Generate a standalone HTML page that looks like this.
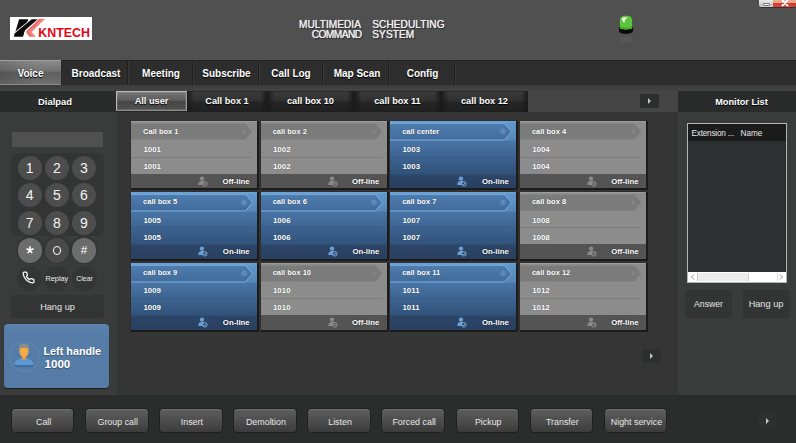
<!DOCTYPE html>
<html>
<head>
<meta charset="utf-8">
<title>Multimedia Scheduling Command System</title>
<style>
*{box-sizing:border-box;margin:0;padding:0}
html,body{width:796px;height:443px;overflow:hidden;background:#505050}
body{position:relative;font-family:"Liberation Sans",sans-serif;color:#fff}
.abs{position:absolute}
/* header */
#hdr{left:0;top:0;width:796px;height:60px;background:#505050}
#logo{left:10px;top:17px;width:81.7px;height:23px;background:#fff;overflow:hidden}
.title{top:20.3px;font-size:10.2px;line-height:10px;color:#ececec;text-shadow:0 0 .7px #fff,1px 1px 1px #1c1c1c;white-space:nowrap}
/* nav */
#nav{left:0;top:60px;width:796px;height:25px;background:#2d2d2d;border-top:1px solid #242424}
.nt{position:absolute;top:0;height:24px;font-size:10px;font-weight:bold;text-align:center;line-height:25.6px;border-right:1px solid #1f1f1f;box-shadow:1px 0 0 #383838;color:#fff;text-shadow:0 1px 1px #000}
#gap{left:0;top:85px;width:796px;height:6px;background:linear-gradient(to bottom,#3c3c3c,#434343)}
/* sub row */
#subrow{left:0;top:91px;width:796px;height:21px;background:#454545}
.st{position:absolute;top:0;height:21px;font-size:9.2px;font-weight:bold;text-align:center;line-height:21px;color:#fff;text-shadow:0 1px 1px #000}
.dk{background:#2a2c2c}
.tab{background:linear-gradient(to right,#1a1a1a 0,rgba(26,26,26,0) 9%,rgba(26,26,26,0) 92%,#1a1a1a 100%),linear-gradient(to bottom,#1c1c1c 0,#3b3b3b 1px,#303030 46%,#252525 54%,#1f1f1f 100%)}
.arrow{position:absolute;width:19px;height:14px;background:#2d2f2f}
.arrow:after{content:"";position:absolute;left:8px;top:4.2px;border-left:3.7px solid #c6c6c6;border-top:3.1px solid transparent;border-bottom:3.1px solid transparent}
/* panels */
#left{left:0;top:112px;width:117px;height:283px;background:#3a3c3c}
#main{left:117px;top:112px;width:561px;height:283px;background:#353535}
#right{left:678px;top:112px;width:118px;height:283px;background:#3a3c3c}
#bottom{left:0;top:395px;width:796px;height:48px;background:#2b2d2d}
/* keypad */
.key{position:absolute;width:24px;height:24px;border-radius:12px;background:#4d4d4d;color:#f4f4f4;font-size:14px;line-height:24.6px;text-align:center}
/* cards */
.card{position:absolute;width:126px;height:67.1px;background:linear-gradient(to bottom,#a8a8a8 0,#8c8c8c 1.2px);box-shadow:1px 1px 0 1px #1b1b1b,0 0 0 .5px #2a2a2a;overflow:hidden}
.card .t{position:absolute;left:11.8px;font-size:7.5px;font-weight:bold;color:#fff;white-space:nowrap;text-shadow:0 0 1px rgba(0,0,0,.45)}
.card .t.n{font-size:7.9px;left:12.1px}
.card .sep{position:absolute;left:0;top:35.3px;width:121px;height:1px;background:#7d7d7d}
.card .ft{position:absolute;left:0;top:52.5px;width:126px;height:15px;background:#545454}
.card .stt{position:absolute;right:7.6px;top:55.5px;font-size:7.8px;font-weight:bold;color:#fff;white-space:nowrap;text-shadow:0 0 1.5px rgba(0,0,0,.7)}
.card.on{background:linear-gradient(to bottom,#6ea6da 0,#659cd1 1.5px,#6097cb 3px,#5587b9 19px,#4975a6 20px,#406896 32px,#385d88 42px,#31537b 52px)}
.card.on .sep{background:#385c87}
.card.on .ft{background:linear-gradient(to bottom,#314f74 0,#2c4566 2px,#294060 100%)}
/* bottom buttons */
.bb{position:absolute;top:407.7px;width:63.5px;height:25.8px;border-radius:4px;border:1px solid #202020;background:linear-gradient(to bottom,#5e5e5e 0,#4d4d4d 50%,#3c3c3c 100%);font-size:8.9px;color:#e6e6e6;text-align:center;line-height:27px;padding-left:2px;box-shadow:inset 0 1px 0 #707070}
.rb{position:absolute;top:290px;height:28px;width:47px;border-radius:3px;background:#333535;font-size:9.2px;color:#e6e6e6;text-align:center;line-height:29.5px}
</style>
</head>
<body>
<div id="hdr" class="abs"></div>
<div id="logo" class="abs">
<svg width="82" height="23" viewBox="0 0 82 23">
<polygon points="9.1,2.2 18.2,2.2 12.9,19.4 4,19.4" fill="#0c0c0c"/>
<polygon points="21.7,2.2 27.7,2.2 14.5,13.7 12.9,19.4 4,19.4 5.2,15.5" fill="#0c0c0c"/>
<polygon points="4.6,15.2 17.8,4.4 18.3,5.1 5.1,16" fill="#fff"/>
<polygon points="29,1.7 35.3,1.7 21.7,15 25.8,19.7 19.2,19.7 15.7,14.7" fill="#e8392f" opacity=".62"/>
<path d="M30.5 2.5 L17.5 14.7 L21.5 19.3" fill="none" stroke="#e8392f" stroke-width=".9" opacity=".8"/>
<text x="28.3" y="20.1" font-family="Liberation Sans, sans-serif" font-weight="bold" font-size="13.4" fill="#e30613" textLength="51.7" lengthAdjust="spacingAndGlyphs">KNTECH</text>
</svg>
</div>
<div class="abs title" style="left:291px;width:70px;text-align:right">MULTIMEDIA<br><span style="letter-spacing:-.55px;margin-right:-.55px">COMMAND</span></div>
<div class="abs title" style="left:372.3px;text-align:left">SCHEDULTING<br>SYSTEM</div>

<div class="abs" style="left:759px;top:0;width:14px;height:8px;background:linear-gradient(to bottom,#e9e9e9 0,#dcdcdc 45%,#c2c2c2 55%,#d0d0d0 100%);border-radius:0 0 0 3px;border-bottom:1px solid #333"><div class="abs" style="left:4px;top:2.5px;width:7px;height:3px;background:#fff;border:1px solid #777;border-radius:1px"></div></div>
<div class="abs" style="left:773px;top:0;width:23px;height:8px;background:linear-gradient(to bottom,#e8b090 0,#e6a58a 40%,#d8392f 50%,#e0453a 100%);border-radius:0 0 3px 0;border-bottom:1px solid #333"><svg class="abs" style="left:8px;top:-0.5px" width="8" height="7" viewBox="0 0 8 7"><path d="M1.5 0.5 L6.5 5.5 M6.5 0.5 L1.5 5.5" stroke="#fff" stroke-width="1.8" stroke-linecap="round"/></svg></div>
<svg class="abs" style="left:617px;top:14.4px" width="18" height="32" viewBox="0 0 18 32">
<path d="M2 13 L2 17.3 C2 20.6 16 20.6 16 17.3 L16 13 Z" fill="#0a0a0a"/>
<path d="M2.9 14.3 L2.9 6.5 C2.9 3 5 1.7 9 1.7 S15.1 3 15.1 6.5 L15.1 14.3 C12.8 15.8 5.2 15.8 2.9 14.3 Z" fill="#5bc63c"/>
<path d="M4.6 4.6 C6.2 3.3 9 3.1 10.8 3.5 C8.6 4.3 7.7 6 7.3 9 C6.2 8 5.1 6.6 4.6 4.6 Z" fill="#f4fff0"/>
<path d="M2.9 11.5 C5.2 13.6 12.8 13.6 15.1 11.5 L15.1 14.3 C12.8 15.8 5.2 15.8 2.9 14.3 Z" fill="#46b32c"/>
<ellipse cx="9" cy="25.5" rx="6" ry="3.5" fill="#5e5e5e" opacity=".5"/>
</svg>
<div id="nav" class="abs">
<div class="nt" style="left:0;top:-1px;height:25px;width:62px;line-height:27.6px;border-right:1px solid #2a2a2a;background:linear-gradient(to right,rgba(40,40,40,.22) 0,rgba(40,40,40,0) 60%),linear-gradient(to bottom,#8c8c8c 0,#747474 42%,#5e5e5e 52%,#707070 100%);box-shadow:inset 0 1px 0 #a0a0a0,inset 0 -1px 0 #8a8a8a">Voice</div>
<div class="nt" style="left:62px;width:66px;padding-left:3px">Broadcast</div>
<div class="nt" style="left:128px;width:65px;padding-left:2px">Meeting</div>
<div class="nt" style="left:193px;width:66px;padding-left:2px">Subscribe</div>
<div class="nt" style="left:259px;width:64px;padding-left:1px">Call Log</div>
<div class="nt" style="left:323px;width:66px;padding-left:3px">Map Scan</div>
<div class="nt" style="left:389px;width:66px;padding-left:2px">Config</div>
</div>
<div id="gap" class="abs"></div>

<div id="subrow" class="abs">
<div class="st dk" style="left:0;width:116px;padding-right:6px;font-size:9.4px">Dialpad</div>
<div class="st" style="left:116px;width:71px;border:1px solid #b8b8b8;border-right-color:#999;border-bottom-color:#8d8d8d;background:linear-gradient(to bottom,#767676 0,#5c5c5c 46%,#454545 54%,#515151 100%);box-shadow:inset 0 0 0 1px rgba(255,255,255,.12);height:20.3px;box-shadow:inset 0 0 0 1px rgba(255,255,255,.12),0 1px 0 #262626;line-height:18.5px">All user</div>
<div class="st tab" style="left:187px;width:80px">Call box 1</div>
<div class="st tab" style="left:267px;width:87px">call box 10</div>
<div class="st tab" style="left:354px;width:87px">call box 11</div>
<div class="st tab" style="left:441px;width:87px">call box 12</div>
<div class="arrow" style="left:640px;top:3px"></div>
<div class="st dk" style="left:678px;width:118px;padding-left:9px;line-height:22.5px">Monitor List</div>
</div>

<div id="left" class="abs"></div>
<div id="main" class="abs"></div>
<div id="right" class="abs"></div>
<div id="bottom" class="abs"></div>

<!-- LEFT PANEL CONTENT -->
<div id="lp">
<div class="abs" style="left:12px;top:132px;width:91px;height:15px;background:#505050"></div>
<div class="abs" style="left:11px;top:153px;width:93px;height:83px;border-radius:8px;background:#333535"></div>
<div class="key" style="left:17.7px;top:155.8px">1</div>
<div class="key" style="left:44.9px;top:155.8px">2</div>
<div class="key" style="left:72.0px;top:155.8px">3</div>
<div class="key" style="left:17.7px;top:183.4px">4</div>
<div class="key" style="left:44.9px;top:183.4px">5</div>
<div class="key" style="left:72.0px;top:183.4px">6</div>
<div class="key" style="left:17.7px;top:210.8px">7</div>
<div class="key" style="left:44.9px;top:210.8px">8</div>
<div class="key" style="left:72.0px;top:210.8px">9</div>
<div class="abs" style="left:15.7px;top:236.4px;width:28px;height:28px;border-radius:14px;background:#343636"></div>
<div class="key" style="left:17.5px;top:238.2px;width:24.4px;height:24.4px;border-radius:13px;background:#6c6c6c"></div>
<div class="abs" style="left:42.9px;top:236.4px;width:28px;height:28px;border-radius:14px;background:#343636"></div>
<div class="key" style="left:44.7px;top:238.2px;width:24.4px;height:24.4px;border-radius:13px;background:#4a4a4a"></div>
<div class="abs" style="left:70.1px;top:236.4px;width:28px;height:28px;border-radius:14px;background:#343636"></div>
<div class="key" style="left:71.9px;top:238.2px;width:24.4px;height:24.4px;border-radius:13px;background:#6c6c6c"></div>
<svg class="abs" style="left:24.7px;top:245.4px" width="10" height="10" viewBox="-5 -5 10 10"><path d="M0 -3.8 L0 0 L3.6 -1.2 M0 0 L2.2 3.1 M0 0 L-2.2 3.1 M0 0 L-3.6 -1.2" fill="none" stroke="#fff" stroke-width="1.5"/></svg>
<div class="abs" style="left:52.7px;top:246.2px;width:8.4px;height:8.4px;border-radius:5px;border:1.5px solid #fff"></div>
<div class="abs" style="left:72.1px;top:238.4px;width:24px;height:24px;line-height:24.5px;text-align:center;font-size:11.8px;color:#fff">#</div>
<div class="key" style="left:17.2px;top:266.3px;width:25px;height:25px;border-radius:13px;line-height:26px;padding-left:0px;background:#343636;font-size:7.3px;color:#ececec"></div>
<div class="key" style="left:44.4px;top:266.3px;width:25px;height:25px;border-radius:13px;line-height:26px;padding-left:0px;background:#343636;font-size:7.3px;color:#ececec">Replay</div>
<div class="key" style="left:71.6px;top:266.3px;width:25px;height:25px;border-radius:13px;line-height:26px;padding-left:1px;background:#343636;font-size:6.9px;color:#ececec">Clear</div>
<svg class="abs" style="left:22px;top:271px" width="13" height="13" viewBox="0 0 24 24"><path d="M22 16.920v3a2 2 0 0 1-2.180 2 19.790 19.790 0 0 1-8.630-3.070 19.5 19.5 0 0 1-6-6 19.790 19.790 0 0 1-3.070-8.670A2 2 0 0 1 4.110 2h3a2 2 0 0 1 2 1.720 12.840 12.840 0 0 0 .7 2.810 2 2 0 0 1-.45 2.110L8.090 9.910a16 16 0 0 0 6 6l1.270-1.270a2 2 0 0 1 2.110-.45 12.840 12.840 0 0 0 2.810.7A2 2 0 0 1 22 16.920z" fill="none" stroke="#fff" stroke-width="2.3" stroke-linejoin="round"/></svg>
<div class="abs" style="left:11px;top:295px;width:93px;height:23px;border-radius:3px;background:#333535;font-size:9.2px;color:#e6e6e6;text-align:center;line-height:24.5px">Hang up</div>
<div class="abs" style="left:4px;top:324px;width:105.2px;height:64px;border-radius:4px;background:linear-gradient(to bottom,#5b83ad 0,#567da7 12px,#557ca6 100%);box-shadow:0 1px 1px #1c1c1c"></div>
<div class="abs" style="left:8.5px;top:341px;width:31px;height:31px;border-radius:16px;border:1px solid #6287b1"></div>
<svg class="abs" style="left:14.4px;top:341.4px" width="20" height="28" viewBox="0 0 20 28">
<path d="M0.8 24 C0.8 19.5 4.5 17.8 10 17.8 S19.2 19.5 19.2 24 L19.2 25 L0.8 25 Z" fill="#5b9bd5"/>
<rect x="0.8" y="24.2" width="18.4" height="1.3" fill="#3d5f8f"/>
<rect x="7.8" y="14" width="4.4" height="4.5" fill="#e8963a"/>
<ellipse cx="10" cy="10.3" rx="4.6" ry="5.6" fill="#f6ab47"/>
<path d="M4.6 9.5 C4 4 7 2.5 10 2.5 S16 4 15.4 9.5 C14.5 7.5 13 6.5 10 6.8 C7.5 6.5 5.5 7.5 4.6 9.5 Z" fill="#8c8c8c"/>
</svg>
<div class="abs" style="left:43.5px;top:345px;font-size:10.8px;font-weight:bold;line-height:12.6px;white-space:nowrap;text-shadow:0 1px 1px rgba(0,0,0,.35)">Left handle<br><span style="font-size:11.6px;margin-left:1px">1000</span></div>
</div>
<!-- CARDS -->
<div id="cards">
<svg width="0" height="0" style="position:absolute"><defs><linearGradient id="gb" x1="0" y1="0" x2="0" y2="1"><stop offset="0" stop-color="#4e7daf"/><stop offset="1" stop-color="#426b9b"/></linearGradient></defs></svg>
<div class="card" style="left:131.3px;top:121.3px"><svg class="abs" style="left:0;top:0" width="126" height="22" viewBox="0 0 126 22"><path d="M-1 2.3 H114.5 L121.6 10.6 L114.5 18.9 H-1 Z" fill="#7b7b7b" stroke="#949494" stroke-width=".8" stroke-opacity=".7"/><circle cx="113" cy="10.5" r="2.3" fill="none" stroke="#9a9a9a" stroke-width=".7" opacity=".35"/><circle cx="113" cy="10.5" r=".85" fill="#9a9a9a" opacity=".85"/></svg><div class="t" style="top:5.5px">Call box 1</div><div class="t n" style="top:23.7px">1001</div><div class="sep"></div><div class="t n" style="top:40.7px">1001</div><div class="ft"></div><svg class="abs" style="left:67px;top:54.5px" width="11" height="11" viewBox="0 0 11 11"><circle cx="4" cy="2.6" r="2.2" fill="#8a8a8a"/><path d="M0.3 8.5 C0.3 5.8 2 5 4 5 S6.5 5.5 7 6 L5 9 L0.3 9 Z" fill="#8a8a8a"/><circle cx="6.8" cy="7.8" r="2.3" fill="#545454" stroke="#a0a0a0" stroke-width=".8"/><path d="M5.4 7.8 h2.6" stroke="#a0a0a0" stroke-width=".8"/></svg><div class="stt">Off-line</div></div>
<div class="card" style="left:260.9px;top:121.3px"><svg class="abs" style="left:0;top:0" width="126" height="22" viewBox="0 0 126 22"><path d="M-1 2.3 H114.5 L121.6 10.6 L114.5 18.9 H-1 Z" fill="#7b7b7b" stroke="#949494" stroke-width=".8" stroke-opacity=".7"/><circle cx="113" cy="10.5" r="2.3" fill="none" stroke="#9a9a9a" stroke-width=".7" opacity=".35"/><circle cx="113" cy="10.5" r=".85" fill="#9a9a9a" opacity=".85"/></svg><div class="t" style="top:5.5px">call box 2</div><div class="t n" style="top:23.7px">1002</div><div class="sep"></div><div class="t n" style="top:40.7px">1002</div><div class="ft"></div><svg class="abs" style="left:67px;top:54.5px" width="11" height="11" viewBox="0 0 11 11"><circle cx="4" cy="2.6" r="2.2" fill="#8a8a8a"/><path d="M0.3 8.5 C0.3 5.8 2 5 4 5 S6.5 5.5 7 6 L5 9 L0.3 9 Z" fill="#8a8a8a"/><circle cx="6.8" cy="7.8" r="2.3" fill="#545454" stroke="#a0a0a0" stroke-width=".8"/><path d="M5.4 7.8 h2.6" stroke="#a0a0a0" stroke-width=".8"/></svg><div class="stt">Off-line</div></div>
<div class="card on" style="left:390.4px;top:121.3px"><svg class="abs" style="left:0;top:0" width="126" height="22" viewBox="0 0 126 22"><path d="M-1 2.3 H114.5 L121.6 10.6 L114.5 18.9 H-1 Z" fill="url(#gb)" stroke="#8cc0ee" stroke-width=".8" stroke-opacity=".9"/><circle cx="113" cy="10.5" r="2.3" fill="none" stroke="#8fbdea" stroke-width=".7" opacity=".6"/><circle cx="113" cy="10.5" r=".85" fill="#8fbdea" opacity=".85"/></svg><div class="t" style="top:5.5px">call center</div><div class="t n" style="top:23.7px">1003</div><div class="sep"></div><div class="t n" style="top:40.7px">1003</div><div class="ft"></div><svg class="abs" style="left:67px;top:54.5px" width="11" height="11" viewBox="0 0 11 11"><circle cx="4" cy="2.6" r="2.2" fill="#6c9fd5"/><path d="M0.3 8.5 C0.3 5.8 2 5 4 5 S6.5 5.5 7 6 L5 9 L0.3 9 Z" fill="#6c9fd5"/><circle cx="6.8" cy="7.8" r="2.3" fill="#2c4668" stroke="#8abbe9" stroke-width=".8"/><path d="M5.5 7.9 l.9 .9 l1.7 -1.9" fill="none" stroke="#8abbe9" stroke-width=".9"/></svg><div class="stt">On-line</div></div>
<div class="card" style="left:520.1px;top:121.3px"><svg class="abs" style="left:0;top:0" width="126" height="22" viewBox="0 0 126 22"><path d="M-1 2.3 H114.5 L121.6 10.6 L114.5 18.9 H-1 Z" fill="#7b7b7b" stroke="#949494" stroke-width=".8" stroke-opacity=".7"/><circle cx="113" cy="10.5" r="2.3" fill="none" stroke="#9a9a9a" stroke-width=".7" opacity=".35"/><circle cx="113" cy="10.5" r=".85" fill="#9a9a9a" opacity=".85"/></svg><div class="t" style="top:5.5px">call box 4</div><div class="t n" style="top:23.7px">1004</div><div class="sep"></div><div class="t n" style="top:40.7px">1004</div><div class="ft"></div><svg class="abs" style="left:67px;top:54.5px" width="11" height="11" viewBox="0 0 11 11"><circle cx="4" cy="2.6" r="2.2" fill="#8a8a8a"/><path d="M0.3 8.5 C0.3 5.8 2 5 4 5 S6.5 5.5 7 6 L5 9 L0.3 9 Z" fill="#8a8a8a"/><circle cx="6.8" cy="7.8" r="2.3" fill="#545454" stroke="#a0a0a0" stroke-width=".8"/><path d="M5.4 7.8 h2.6" stroke="#a0a0a0" stroke-width=".8"/></svg><div class="stt">Off-line</div></div>
<div class="card on" style="left:131.3px;top:191.9px"><svg class="abs" style="left:0;top:0" width="126" height="22" viewBox="0 0 126 22"><path d="M-1 2.3 H114.5 L121.6 10.6 L114.5 18.9 H-1 Z" fill="url(#gb)" stroke="#8cc0ee" stroke-width=".8" stroke-opacity=".9"/><circle cx="113" cy="10.5" r="2.3" fill="none" stroke="#8fbdea" stroke-width=".7" opacity=".6"/><circle cx="113" cy="10.5" r=".85" fill="#8fbdea" opacity=".85"/></svg><div class="t" style="top:5.5px">call box 5</div><div class="t n" style="top:23.7px">1005</div><div class="sep"></div><div class="t n" style="top:40.7px">1005</div><div class="ft"></div><svg class="abs" style="left:67px;top:54.5px" width="11" height="11" viewBox="0 0 11 11"><circle cx="4" cy="2.6" r="2.2" fill="#6c9fd5"/><path d="M0.3 8.5 C0.3 5.8 2 5 4 5 S6.5 5.5 7 6 L5 9 L0.3 9 Z" fill="#6c9fd5"/><circle cx="6.8" cy="7.8" r="2.3" fill="#2c4668" stroke="#8abbe9" stroke-width=".8"/><path d="M5.5 7.9 l.9 .9 l1.7 -1.9" fill="none" stroke="#8abbe9" stroke-width=".9"/></svg><div class="stt">On-line</div></div>
<div class="card on" style="left:260.9px;top:191.9px"><svg class="abs" style="left:0;top:0" width="126" height="22" viewBox="0 0 126 22"><path d="M-1 2.3 H114.5 L121.6 10.6 L114.5 18.9 H-1 Z" fill="url(#gb)" stroke="#8cc0ee" stroke-width=".8" stroke-opacity=".9"/><circle cx="113" cy="10.5" r="2.3" fill="none" stroke="#8fbdea" stroke-width=".7" opacity=".6"/><circle cx="113" cy="10.5" r=".85" fill="#8fbdea" opacity=".85"/></svg><div class="t" style="top:5.5px">call box 6</div><div class="t n" style="top:23.7px">1006</div><div class="sep"></div><div class="t n" style="top:40.7px">1006</div><div class="ft"></div><svg class="abs" style="left:67px;top:54.5px" width="11" height="11" viewBox="0 0 11 11"><circle cx="4" cy="2.6" r="2.2" fill="#6c9fd5"/><path d="M0.3 8.5 C0.3 5.8 2 5 4 5 S6.5 5.5 7 6 L5 9 L0.3 9 Z" fill="#6c9fd5"/><circle cx="6.8" cy="7.8" r="2.3" fill="#2c4668" stroke="#8abbe9" stroke-width=".8"/><path d="M5.5 7.9 l.9 .9 l1.7 -1.9" fill="none" stroke="#8abbe9" stroke-width=".9"/></svg><div class="stt">On-line</div></div>
<div class="card on" style="left:390.4px;top:191.9px"><svg class="abs" style="left:0;top:0" width="126" height="22" viewBox="0 0 126 22"><path d="M-1 2.3 H114.5 L121.6 10.6 L114.5 18.9 H-1 Z" fill="url(#gb)" stroke="#8cc0ee" stroke-width=".8" stroke-opacity=".9"/><circle cx="113" cy="10.5" r="2.3" fill="none" stroke="#8fbdea" stroke-width=".7" opacity=".6"/><circle cx="113" cy="10.5" r=".85" fill="#8fbdea" opacity=".85"/></svg><div class="t" style="top:5.5px">call box 7</div><div class="t n" style="top:23.7px">1007</div><div class="sep"></div><div class="t n" style="top:40.7px">1007</div><div class="ft"></div><svg class="abs" style="left:67px;top:54.5px" width="11" height="11" viewBox="0 0 11 11"><circle cx="4" cy="2.6" r="2.2" fill="#6c9fd5"/><path d="M0.3 8.5 C0.3 5.8 2 5 4 5 S6.5 5.5 7 6 L5 9 L0.3 9 Z" fill="#6c9fd5"/><circle cx="6.8" cy="7.8" r="2.3" fill="#2c4668" stroke="#8abbe9" stroke-width=".8"/><path d="M5.5 7.9 l.9 .9 l1.7 -1.9" fill="none" stroke="#8abbe9" stroke-width=".9"/></svg><div class="stt">On-line</div></div>
<div class="card" style="left:520.1px;top:191.9px"><svg class="abs" style="left:0;top:0" width="126" height="22" viewBox="0 0 126 22"><path d="M-1 2.3 H114.5 L121.6 10.6 L114.5 18.9 H-1 Z" fill="#7b7b7b" stroke="#949494" stroke-width=".8" stroke-opacity=".7"/><circle cx="113" cy="10.5" r="2.3" fill="none" stroke="#9a9a9a" stroke-width=".7" opacity=".35"/><circle cx="113" cy="10.5" r=".85" fill="#9a9a9a" opacity=".85"/></svg><div class="t" style="top:5.5px">call box 8</div><div class="t n" style="top:23.7px">1008</div><div class="sep"></div><div class="t n" style="top:40.7px">1008</div><div class="ft"></div><svg class="abs" style="left:67px;top:54.5px" width="11" height="11" viewBox="0 0 11 11"><circle cx="4" cy="2.6" r="2.2" fill="#8a8a8a"/><path d="M0.3 8.5 C0.3 5.8 2 5 4 5 S6.5 5.5 7 6 L5 9 L0.3 9 Z" fill="#8a8a8a"/><circle cx="6.8" cy="7.8" r="2.3" fill="#545454" stroke="#a0a0a0" stroke-width=".8"/><path d="M5.4 7.8 h2.6" stroke="#a0a0a0" stroke-width=".8"/></svg><div class="stt">Off-line</div></div>
<div class="card on" style="left:131.3px;top:262.5px"><svg class="abs" style="left:0;top:0" width="126" height="22" viewBox="0 0 126 22"><path d="M-1 2.3 H114.5 L121.6 10.6 L114.5 18.9 H-1 Z" fill="url(#gb)" stroke="#8cc0ee" stroke-width=".8" stroke-opacity=".9"/><circle cx="113" cy="10.5" r="2.3" fill="none" stroke="#8fbdea" stroke-width=".7" opacity=".6"/><circle cx="113" cy="10.5" r=".85" fill="#8fbdea" opacity=".85"/></svg><div class="t" style="top:5.5px">call box 9</div><div class="t n" style="top:23.7px">1009</div><div class="sep"></div><div class="t n" style="top:40.7px">1009</div><div class="ft"></div><svg class="abs" style="left:67px;top:54.5px" width="11" height="11" viewBox="0 0 11 11"><circle cx="4" cy="2.6" r="2.2" fill="#6c9fd5"/><path d="M0.3 8.5 C0.3 5.8 2 5 4 5 S6.5 5.5 7 6 L5 9 L0.3 9 Z" fill="#6c9fd5"/><circle cx="6.8" cy="7.8" r="2.3" fill="#2c4668" stroke="#8abbe9" stroke-width=".8"/><path d="M5.5 7.9 l.9 .9 l1.7 -1.9" fill="none" stroke="#8abbe9" stroke-width=".9"/></svg><div class="stt">On-line</div></div>
<div class="card" style="left:260.9px;top:262.5px"><svg class="abs" style="left:0;top:0" width="126" height="22" viewBox="0 0 126 22"><path d="M-1 2.3 H114.5 L121.6 10.6 L114.5 18.9 H-1 Z" fill="#7b7b7b" stroke="#949494" stroke-width=".8" stroke-opacity=".7"/><circle cx="113" cy="10.5" r="2.3" fill="none" stroke="#9a9a9a" stroke-width=".7" opacity=".35"/><circle cx="113" cy="10.5" r=".85" fill="#9a9a9a" opacity=".85"/></svg><div class="t" style="top:5.5px">call box 10</div><div class="t n" style="top:23.7px">1010</div><div class="sep"></div><div class="t n" style="top:40.7px">1010</div><div class="ft"></div><svg class="abs" style="left:67px;top:54.5px" width="11" height="11" viewBox="0 0 11 11"><circle cx="4" cy="2.6" r="2.2" fill="#8a8a8a"/><path d="M0.3 8.5 C0.3 5.8 2 5 4 5 S6.5 5.5 7 6 L5 9 L0.3 9 Z" fill="#8a8a8a"/><circle cx="6.8" cy="7.8" r="2.3" fill="#545454" stroke="#a0a0a0" stroke-width=".8"/><path d="M5.4 7.8 h2.6" stroke="#a0a0a0" stroke-width=".8"/></svg><div class="stt">Off-line</div></div>
<div class="card on" style="left:390.4px;top:262.5px"><svg class="abs" style="left:0;top:0" width="126" height="22" viewBox="0 0 126 22"><path d="M-1 2.3 H114.5 L121.6 10.6 L114.5 18.9 H-1 Z" fill="url(#gb)" stroke="#8cc0ee" stroke-width=".8" stroke-opacity=".9"/><circle cx="113" cy="10.5" r="2.3" fill="none" stroke="#8fbdea" stroke-width=".7" opacity=".6"/><circle cx="113" cy="10.5" r=".85" fill="#8fbdea" opacity=".85"/></svg><div class="t" style="top:5.5px">call box 11</div><div class="t n" style="top:23.7px">1011</div><div class="sep"></div><div class="t n" style="top:40.7px">1011</div><div class="ft"></div><svg class="abs" style="left:67px;top:54.5px" width="11" height="11" viewBox="0 0 11 11"><circle cx="4" cy="2.6" r="2.2" fill="#6c9fd5"/><path d="M0.3 8.5 C0.3 5.8 2 5 4 5 S6.5 5.5 7 6 L5 9 L0.3 9 Z" fill="#6c9fd5"/><circle cx="6.8" cy="7.8" r="2.3" fill="#2c4668" stroke="#8abbe9" stroke-width=".8"/><path d="M5.5 7.9 l.9 .9 l1.7 -1.9" fill="none" stroke="#8abbe9" stroke-width=".9"/></svg><div class="stt">On-line</div></div>
<div class="card" style="left:520.1px;top:262.5px"><svg class="abs" style="left:0;top:0" width="126" height="22" viewBox="0 0 126 22"><path d="M-1 2.3 H114.5 L121.6 10.6 L114.5 18.9 H-1 Z" fill="#7b7b7b" stroke="#949494" stroke-width=".8" stroke-opacity=".7"/><circle cx="113" cy="10.5" r="2.3" fill="none" stroke="#9a9a9a" stroke-width=".7" opacity=".35"/><circle cx="113" cy="10.5" r=".85" fill="#9a9a9a" opacity=".85"/></svg><div class="t" style="top:5.5px">call box 12</div><div class="t n" style="top:23.7px">1012</div><div class="sep"></div><div class="t n" style="top:40.7px">1012</div><div class="ft"></div><svg class="abs" style="left:67px;top:54.5px" width="11" height="11" viewBox="0 0 11 11"><circle cx="4" cy="2.6" r="2.2" fill="#8a8a8a"/><path d="M0.3 8.5 C0.3 5.8 2 5 4 5 S6.5 5.5 7 6 L5 9 L0.3 9 Z" fill="#8a8a8a"/><circle cx="6.8" cy="7.8" r="2.3" fill="#545454" stroke="#a0a0a0" stroke-width=".8"/><path d="M5.4 7.8 h2.6" stroke="#a0a0a0" stroke-width=".8"/></svg><div class="stt">Off-line</div></div>
<div class="arrow" style="left:642px;top:348.5px"></div>
</div>
<!-- RIGHT PANEL CONTENT -->
<div id="rp">
<div class="abs" style="left:687px;top:123px;width:100px;height:160px;border:1px solid #b4b4b4;background:#2c3030"></div>
<div class="abs" style="left:688px;top:124px;width:98px;height:17px;background:#1b1b1b;font-size:8.2px;color:#e8e8e8;line-height:20px;white-space:nowrap"><span class="abs" style="left:3.5px;letter-spacing:-.2px">Extension ...</span><span class="abs" style="left:52.5px">Name</span></div>
<div class="abs" style="left:688px;top:272px;width:98px;height:10px;background:#fff"></div>
<div class="abs" style="left:697px;top:273px;width:52px;height:8px;background:#ececec;border-left:1px solid #c4c4c4;border-right:1px solid #d2d2d2"></div>
<div class="abs" style="left:777px;top:273px;width:1px;height:8px;background:#ddd"></div>
<svg class="abs" style="left:688px;top:272px" width="98" height="10" viewBox="0 0 98 10"><path d="M6 2.5 L3.5 5 L6 7.5 M92 2.5 L94.5 5 L92 7.5" fill="none" stroke="#888" stroke-width=".9"/></svg>
<div class="rb" style="left:685px;font-size:8.7px">Answer</div>
<div class="rb" style="left:742.5px">Hang up</div>
</div>
<!-- BOTTOM BUTTONS -->
<div id="bbs">
<div class="bb" style="left:10.9px">Call</div>
<div class="bb" style="left:85.0px">Group call</div>
<div class="bb" style="left:159.1px">Insert</div>
<div class="bb" style="left:233.2px">Demoltion</div>
<div class="bb" style="left:307.3px">Listen</div>
<div class="bb" style="left:381.4px">Forced call</div>
<div class="bb" style="left:455.5px">Pickup</div>
<div class="bb" style="left:529.6px">Transfer</div>
<div class="bb" style="left:603.7px">Night service</div>
<div class="arrow" style="left:758px;top:413.5px;background:#2e3030"></div>
</div>
</body>
</html>
